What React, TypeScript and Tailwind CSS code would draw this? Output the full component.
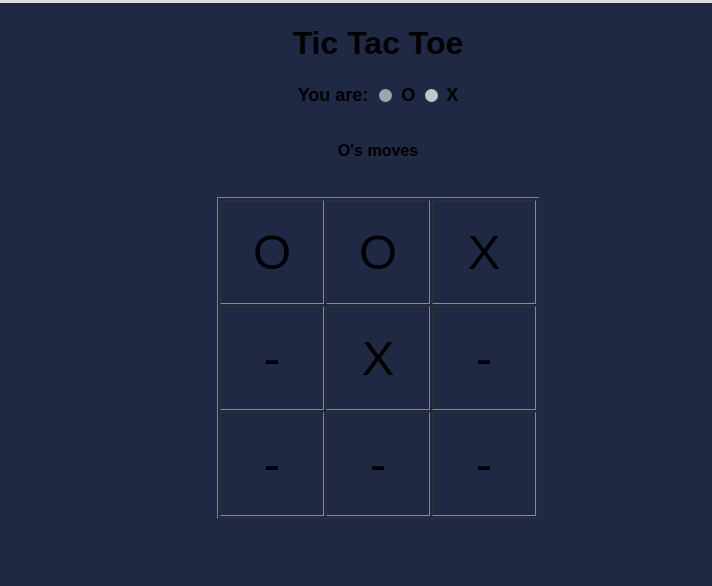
const board: string[] = ["O", "O", "X", "-", "X", "-", "-", "-", "-"];

function Radio({ shade }: { shade: string }) {
  return <span className={`inline-block w-[13px] h-[13px] rounded-full ${shade}`} />;
}

export default function App() {
  return (
    <div className="min-h-screen flex flex-col font-['Liberation_Sans',Arial,sans-serif] text-black">
      <div className="h-[3px] bg-[#dcdcdc]" />
      <main className="flex-1 bg-[#1f2944] pl-[44px] flex flex-col items-center">
        <h1 className="mt-[22px] text-[32px] leading-[36px] font-bold">Tic Tac Toe</h1>

        <div className="mt-[22px] flex items-center text-[18px] leading-[24px] font-bold">
          <span>You are:</span>
          <span className="ml-[11px] flex items-center">
            <Radio shade="bg-[#a3a5aa]" />
          </span>
          <span className="ml-[9px]">O</span>
          <span className="ml-[10px] flex items-center">
            <Radio shade="bg-[#c3c5cb]" />
          </span>
          <span className="ml-[8px]">X</span>
        </div>

        <p className="mt-[34px] text-[16px] leading-[20px] font-bold">O's moves</p>

        <div className="mt-[36px] grid grid-cols-3 gap-[2px] p-[2px] border border-t-[#848484] border-l-[#848484] border-r-[#2f3035] border-b-[#2f3035]">
          {board.map((cell, i) => (
            <div
              key={i}
              className="w-[104px] h-[104px] flex items-center justify-center border border-t-[#2f3035] border-l-[#2f3035] border-r-[#8a8a8a] border-b-[#8a8a8a] text-[49px] leading-none"
            >
              {cell}
            </div>
          ))}
        </div>
      </main>
    </div>
  );
}
